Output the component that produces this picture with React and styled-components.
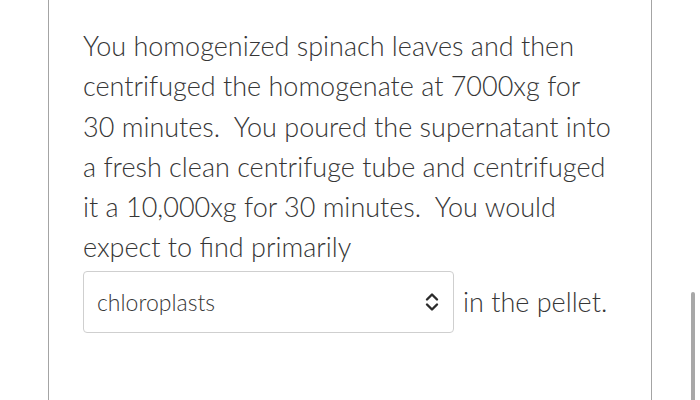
import React from 'react'
import styled, { createGlobalStyle } from 'styled-components'

const Global = createGlobalStyle`
  html, body {
    margin: 0;
    padding: 0;
    background: #fff;
  }
  body {
    font-family: Lato, "Noto Sans", sans-serif;
    font-weight: 300;
    color: #363636;
    overflow: hidden;
  }
`

const Page = styled.div`
  width: 700px;
  height: 400px;
  display: flex;
  background: #fff;
`

const Card = styled.div`
  margin-left: 48px;
  width: 604px;
  height: 400px;
  box-sizing: border-box;
  border-left: 1px solid #a4a4a4;
  border-right: 1px solid #a4a4a4;
  padding: 26px 0 0 34px;
`

const Question = styled.p`
  margin: 0;
  font-size: 27px;
  line-height: 40.3px;
`

const AnswerRow = styled.div`
  display: flex;
  align-items: center;
  margin-top: 3px;
`

const SelectBox = styled.div`
  box-sizing: border-box;
  width: 371px;
  height: 62px;
  border: 1px solid #cfcfcf;
  border-radius: 4px;
  display: flex;
  align-items: center;
  justify-content: space-between;
  padding: 0 14px 0 13px;
  font-size: 23px;
`

const Chevron = styled.svg`
  width: 14px;
  height: 20px;
  flex: none;
`

const After = styled.span`
  margin-left: 9px;
  font-size: 27px;
`

const ScrollTrack = styled.div`
  flex: 1;
  display: flex;
  justify-content: flex-end;
  padding-right: 5px;
`

const Thumb = styled.div`
  margin-top: 292px;
  width: 4px;
  height: 120px;
  border-radius: 2px;
  background: #a8a8a8;
`

const App = () => {
  return (
    <>
      <Global />
      <Page>
        <Card>
          <Question>
            You homogenized spinach leaves and then<br />
            centrifuged the homogenate at 7000xg for<br />
            30 minutes.&nbsp; You poured the supernatant into<br />
            a fresh clean centrifuge tube and centrifuged<br />
            it a 10,000xg for 30 minutes.&nbsp; You would<br />
            expect to find primarily
          </Question>
          <AnswerRow>
            <SelectBox>
              <span>chloroplasts</span>
              <Chevron viewBox="0 0 14 20">
                <path
                  d="M2 7.5 L7 2.5 L12 7.5 M2 12.5 L7 17.5 L12 12.5"
                  fill="none"
                  stroke="#2b2b2b"
                  strokeWidth="2.4"
                  strokeLinecap="round"
                  strokeLinejoin="round"
                />
              </Chevron>
            </SelectBox>
            <After>in the pellet.</After>
          </AnswerRow>
        </Card>
        <ScrollTrack>
          <Thumb />
        </ScrollTrack>
      </Page>
    </>
  )
}

export default App
